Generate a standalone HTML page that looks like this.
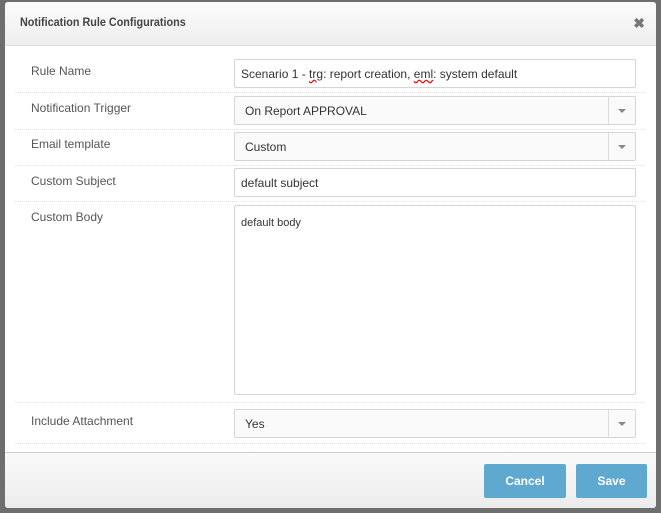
<!DOCTYPE html><html><head><style>
body{margin:0;width:661px;height:513px;background:#6e6e6e;font-family:"Liberation Sans",sans-serif;position:relative;overflow:hidden}
.m{position:absolute;left:5px;top:2px;width:651px;height:506px;background:#fff;border-radius:3px;overflow:hidden}
.h{position:absolute;left:0;top:0;width:100%;height:43px;background:linear-gradient(#fcfcfc,#eeeeee);border-bottom:1px solid #ddd;}
.h span{position:absolute;left:15px;top:15px;font-size:11.5px;font-weight:bold;color:#444;transform:scaleX(.94);transform-origin:left}
.x{position:absolute;right:11px;top:13px;font-size:14px;font-weight:bold;color:#777}
.l{position:absolute;left:26px;font-size:12px;color:#555}
.i{position:absolute;left:229px;width:400px;height:27px;border:1px solid #d5d5d5;border-radius:2px;background:#fff;font-size:12px;color:#333;box-sizing:content-box}
.i span{position:absolute;left:6px;top:7px}
.s{background:#fafafa}
.s span{left:10px}
.s b{position:absolute;right:0;top:0;width:26px;height:27px;border-left:1px solid #ddd}
.s b:after{content:"";position:absolute;left:9px;top:12px;border:4px solid transparent;border-top:4px solid #888}
.d{position:absolute;left:10px;width:630px;border-top:1px dotted #e5e5e5}
.f{position:absolute;left:0;top:450px;width:100%;height:56px;background:linear-gradient(#fafafa,#ececec);border-top:1px solid #ccc}
.btn{position:absolute;top:11px;height:34px;background:#5fa8cf;color:#fff;font-size:12px;font-weight:bold;text-align:center;line-height:34px;border-radius:2px}
</style></head><body>
<div class="m">
<div class="h"><span>Notification Rule Configurations</span><div class="x">✖</div></div>
<div class="l" style="top:62px">Rule Name</div>
<div class="i" style="top:57px"><span>Scenario 1 - <u style="text-decoration:underline wavy red">trg</u>: report creation, <u style="text-decoration:underline wavy red">eml</u>: system default</span></div>
<div class="d" style="top:90px"></div>
<div class="l" style="top:99px">Notification Trigger</div>
<div class="i s" style="top:94px"><span>On Report APPROVAL</span><b></b></div>
<div class="d" style="top:127px"></div>
<div class="l" style="top:135px">Email template</div>
<div class="i s" style="top:130px"><span>Custom</span><b></b></div>
<div class="d" style="top:163px"></div>
<div class="l" style="top:172px">Custom Subject</div>
<div class="i" style="top:166px"><span>default subject</span></div>
<div class="d" style="top:199px"></div>
<div class="l" style="top:208px">Custom Body</div>
<div class="i" style="top:203px;height:188px;font-size:11px"><span style="top:11px">default body</span></div>
<div class="d" style="top:400px"></div>
<div class="l" style="top:412px">Include Attachment</div>
<div class="i s" style="top:407px"><span>Yes</span><b></b></div>
<div class="d" style="top:441px"></div>
<div class="f"><div class="btn" style="left:479px;width:82px">Cancel</div><div class="btn" style="left:571px;width:71px">Save</div></div>
</div>
</body></html>
